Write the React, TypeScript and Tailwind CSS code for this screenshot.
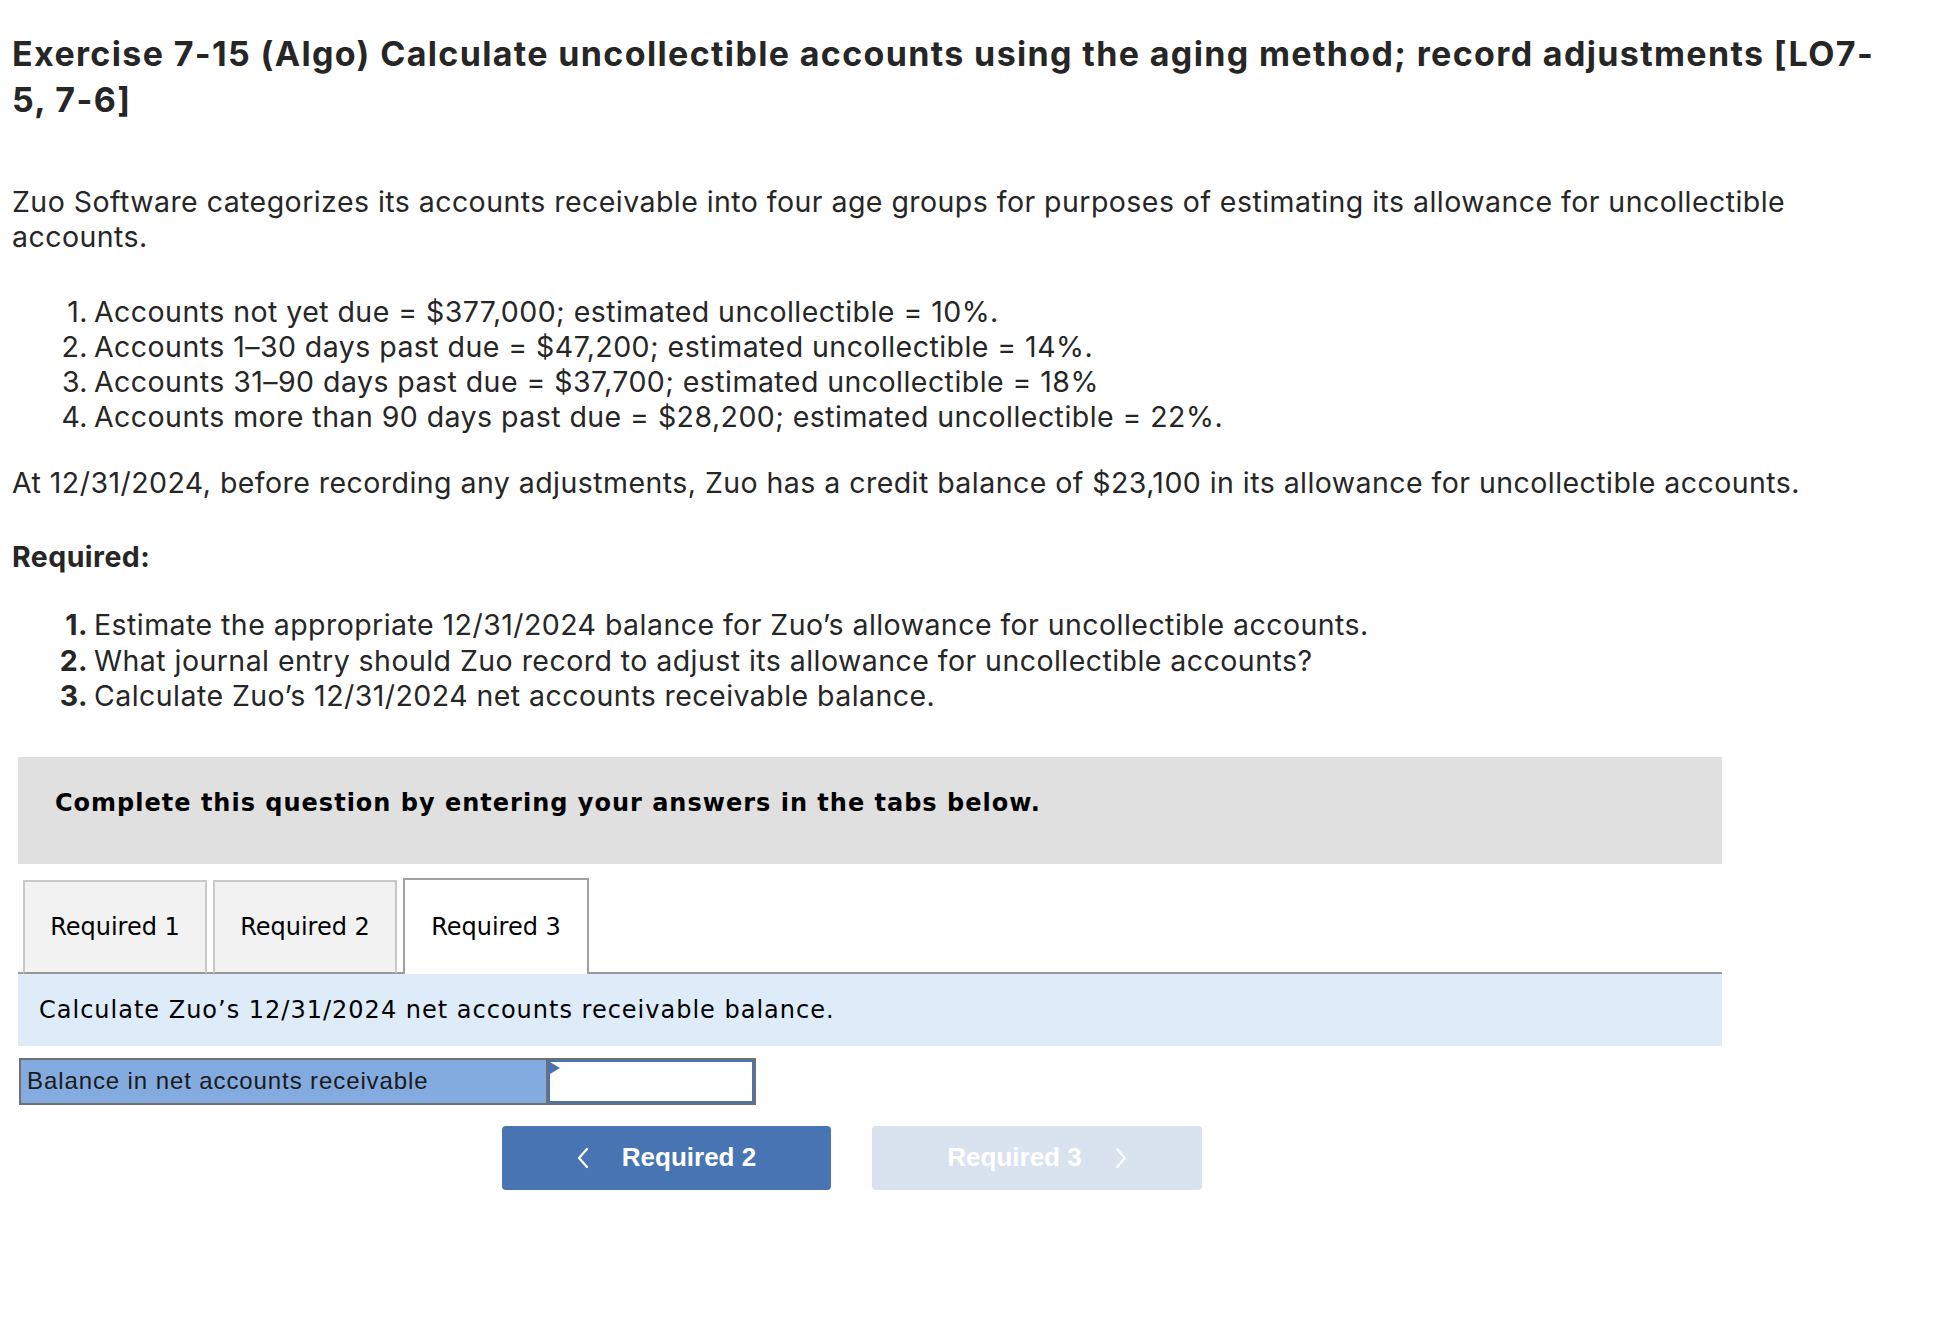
function ChevronLeft() {
  return (
    <svg width="12" height="22" viewBox="0 0 12 22" fill="none">
      <polyline points="10,2 2,11 10,20" stroke="white" strokeWidth="2.2" strokeLinecap="round" strokeLinejoin="round" />
    </svg>
  );
}

function ChevronRight() {
  return (
    <svg width="12" height="22" viewBox="0 0 12 22" fill="none">
      <polyline points="2,2 10,11 2,20" stroke="white" strokeWidth="2.2" strokeLinecap="round" strokeLinejoin="round" />
    </svg>
  );
}

const aging = [
  'Accounts not yet due = $377,000; estimated uncollectible = 10%.',
  'Accounts 1–30 days past due = $47,200; estimated uncollectible = 14%.',
  'Accounts 31–90 days past due = $37,700; estimated uncollectible = 18%',
  'Accounts more than 90 days past due = $28,200; estimated uncollectible = 22%.',
];

const required = [
  'Estimate the appropriate 12/31/2024 balance for Zuo’s allowance for uncollectible accounts.',
  'What journal entry should Zuo record to adjust its allowance for uncollectible accounts?',
  'Calculate Zuo’s 12/31/2024 net accounts receivable balance.',
];

export default function App() {
  return (
    <div className="min-h-screen bg-white text-[#262626] font-['Inter',sans-serif] pl-[12px] pt-[31px]">
      <h1 className="text-[34px] leading-[46px] font-bold tracking-[1.35px] whitespace-nowrap">
        Exercise 7-15 (Algo) Calculate uncollectible accounts using the aging method; record adjustments [LO7-
        <br />
        5, 7-6]
      </h1>

      {/* Problem text */}
      <div className="text-[28.5px] leading-[35px] tracking-[0.45px]">
        <p className="mt-[61px] whitespace-nowrap">
          Zuo Software categorizes its accounts receivable into four age groups for purposes of estimating its allowance for uncollectible
          <br />
          accounts.
        </p>

        <div className="mt-[40px]">
          {aging.map((line, i) => (
            <div key={i} className="flex">
              <span className="w-[82px] pr-[6px] text-right">{i + 1}.</span>
              <span>{line}</span>
            </div>
          ))}
        </div>

        <p className="mt-[31px] whitespace-nowrap">
          At 12/31/2024, before recording any adjustments, Zuo has a credit balance of $23,100 in its allowance for uncollectible accounts.
        </p>

        <p className="mt-[39px] font-bold">Required:</p>

        <div className="mt-[33px] leading-[35.5px]">
          {required.map((line, i) => (
            <div key={i} className="flex">
              <span className="w-[82px] pr-[6px] text-right font-bold">{i + 1}.</span>
              <span>{line}</span>
            </div>
          ))}
        </div>
      </div>

      {/* Question widget */}
      <div className="mt-[43px] ml-[6px] w-[1704px] font-['DejaVu_Sans',Verdana,sans-serif] text-black">
        <div className="h-[107px] bg-[#e0e0e0] pl-[37px] pt-[31px]">
          <p className="text-[24px] leading-[30px] font-bold tracking-[1px]">
            Complete this question by entering your answers in the tabs below.
          </p>
        </div>

        <div className="mt-[14px] flex items-end border-b-[2px] border-[#999999] pl-[5px] gap-[6px]">
          <div className="w-[184px] h-[94px] -mb-[2px] flex items-center justify-center bg-[#f2f2f2] border-[2px] border-[#c8c8c8] border-b-[#999999] text-[24px]">
            Required 1
          </div>
          <div className="w-[184px] h-[94px] -mb-[2px] flex items-center justify-center bg-[#f2f2f2] border-[2px] border-[#c8c8c8] border-b-[#999999] text-[24px]">
            Required 2
          </div>
          <div className="w-[186px] h-[96px] -mb-[2px] flex items-center justify-center bg-white border-[2px] border-b-0 border-[#a0a0a0] text-[24px]">
            Required 3
          </div>
        </div>

        <div className="h-[72px] bg-[#deebf8] pl-[21px] flex items-center">
          <p className="text-[24px] leading-[30px] tracking-[1px]">
            Calculate Zuo’s 12/31/2024 net accounts receivable balance.
          </p>
        </div>

        <div className="mt-[12px] ml-[1px] w-[737px] h-[47px] flex border-[2.5px] border-[#707070] font-['Liberation_Sans',Arial,sans-serif]">
          <div className="w-[527px] bg-[#84abdf] border-r-[2.5px] border-[#707070] pl-[6px] flex items-center text-[24px] tracking-[0.9px] text-[#1a1a1a]">
            Balance in net accounts receivable
          </div>
          <div className="relative flex-1 bg-white border-[2px] border-[#4a72b3]">
            <div className="absolute left-0 top-0 w-0 h-0 border-t-[6px] border-b-[6px] border-l-[10px] border-t-transparent border-b-transparent border-l-[#4a72b3]" />
          </div>
        </div>

        <div className="mt-[21px] ml-[484px] flex gap-[41px] font-['Liberation_Sans',Arial,sans-serif] font-bold text-[26px] text-white">
          <button className="w-[329px] h-[64px] rounded-[4px] bg-[#4974b3] flex items-center justify-center gap-[33px]">
            <ChevronLeft />
            <span>Required 2</span>
          </button>
          <button className="w-[330px] h-[64px] rounded-[4px] bg-[#d9e3ef] flex items-center justify-center gap-[33px]">
            <span>Required 3</span>
            <ChevronRight />
          </button>
        </div>
      </div>
    </div>
  );
}
